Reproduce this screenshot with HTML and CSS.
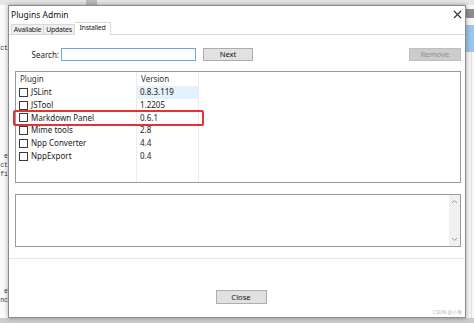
FILE: index.html
```html
<!DOCTYPE html>
<html lang="en">
<head>
  <meta charset="UTF-8">
  <title>Plugins Admin</title>
  <link rel="stylesheet" href="styles.css">
</head>
<body>

  <div class="top-band"><span class="thumb"></span></div>

  <div class="desk">
    <pre class="editor-left">




ct











e
ct
fi












e
nc</pre>

    <div class="dialog">
      <div class="titlebar">
        <span>Plugins Admin</span>
        <svg class="close-x" width="9" height="9" viewBox="0 0 9 9"><path d="M1 1L8 8M8 1L1 8" stroke="#333" stroke-width="1.1" fill="none"/></svg>
      </div>

      <div class="tabs">
        <div class="tab tab-available">Available</div>
        <div class="tab tab-updates">Updates</div>
        <div class="tab tab-installed active">Installed</div>
      </div>

      <div class="panel">
        <div class="search-row">
          <label class="search-label" for="search">Search:</label>
          <input type="text" id="search" class="search-input">
          <button class="btn next-btn">Next</button>
          <button class="btn remove-btn" disabled>Remove</button>
        </div>

        <div class="list">
          <div class="row head">
            <div class="cell">Plugin</div>
            <div class="cell">Version</div>
            <div class="cell"></div>
          </div>
          <div class="row">
            <div class="cell"><span class="check"></span>JSLint</div>
            <div class="cell hot">0.8.3.119</div>
            <div class="cell"></div>
          </div>
          <div class="row">
            <div class="cell"><span class="check"></span>JSTool</div>
            <div class="cell">1.2205</div>
            <div class="cell"></div>
          </div>
          <div class="row">
            <div class="cell"><span class="check"></span>Markdown Panel</div>
            <div class="cell">0.6.1</div>
            <div class="cell"></div>
          </div>
          <div class="row">
            <div class="cell"><span class="check"></span>Mime tools</div>
            <div class="cell">2.8</div>
            <div class="cell"></div>
          </div>
          <div class="row">
            <div class="cell"><span class="check"></span>Npp Converter</div>
            <div class="cell">4.4</div>
            <div class="cell"></div>
          </div>
          <div class="row">
            <div class="cell"><span class="check"></span>NppExport</div>
            <div class="cell">0.4</div>
            <div class="cell"></div>
          </div>
          <div class="row filler">
            <div class="cell"></div>
            <div class="cell"></div>
            <div class="cell"></div>
          </div>
          <div class="mark"></div>
        </div>

        <div class="desc">
          <div class="desc-text"></div>
          <div class="scrollbar">
            <svg width="7" height="5" viewBox="0 0 7 5"><path d="M1 4L3.5 1.5L6 4" stroke="#9a9a9a" fill="none"/></svg>
            <svg width="7" height="5" viewBox="0 0 7 5"><path d="M1 1L3.5 3.5L6 1" stroke="#9a9a9a" fill="none"/></svg>
          </div>
        </div>
      </div>

      <div class="footer">
        <button class="btn close-btn">Close</button>
      </div>

      <span class="watermark">CSDN @小菜</span>
    </div>

    <div class="editor-right">
      <div class="r-gray"></div>
      <div class="r-blue"></div>
      <div class="r-rest"></div>
    </div>
  </div>

  <div class="bottom-band"></div>

</body>
</html>
```

FILE: styles.css
```css
* {
  margin: 0;
  padding: 0;
  box-sizing: border-box;
}

body {
  width: 474px;
  height: 323px;
  overflow: hidden;
  background: #e4e4e4;
  font-family: "Noto Sans", Arial, sans-serif;
  font-size: 8px;
  color: #1a1a1a;
}

.top-band {
  height: 5px;
  background: #e6e6e6;
  padding-left: 86px;
}

.top-band .thumb {
  display: block;
  width: 11px;
  height: 5px;
  background: #bdbdbd;
}

.desk {
  display: flex;
  height: 313px;
}

.editor-left {
  width: 8px;
  background: #fbfbfb;
  font-family: "Liberation Mono", monospace;
  font-size: 6.5px;
  line-height: 9px;
  color: #333;
  overflow: hidden;
  padding-top: 3px;
  text-align: right;
}

.dialog {
  width: 458px;
  height: 313px;
  background: #fff;
  border: 1px solid #8c8c8c;
  box-shadow: 0 0 5px rgba(0, 0, 0, 0.35);
  display: flex;
  flex-direction: column;
  position: relative;
  z-index: 1;
}

.titlebar {
  height: 16px;
  display: flex;
  justify-content: space-between;
  align-items: center;
  padding: 0 3px 0 2px;
  font-size: 8.5px;
  color: #111;
}

.close-x {
  display: block;
}

.tabs {
  height: 12px;
  display: flex;
  align-items: flex-end;
  padding-left: 2px;
}

.tab {
  height: 10px;
  line-height: 9px;
  text-align: center;
  background: #f0f0f0;
  border: 1px solid #d9d9d9;
  border-bottom: none;
  font-size: 7px;
  letter-spacing: -0.25px;
  color: #222;
  white-space: nowrap;
}

.tab + .tab {
  border-left: none;
}

.tab-available {
  width: 33px;
}

.tab-updates {
  width: 31px;
}

.tab-installed {
  width: 36px;
}

.tab.active {
  height: 13px;
  line-height: 10px;
  margin-bottom: -1px;
  background: #fff;
  position: relative;
  z-index: 1;
}

.panel {
  border-top: 1px solid #d9d9d9;
  border-bottom: 1px solid #e6e6e6;
  padding: 13px 4px 11px 6px;
}

.search-row {
  display: flex;
  align-items: center;
  height: 13px;
}

.search-label {
  width: 46px;
  text-align: right;
  padding-right: 2px;
}

.search-input {
  width: 135px;
  height: 13px;
  border: 1px solid #6ea6dc;
  outline: none;
}

.btn {
  height: 13px;
  font-family: "Noto Sans", Arial, sans-serif;
  font-size: 7.6px;
  line-height: 11px;
  background: #e1e1e1;
  border: 1px solid #adadad;
  color: #111;
}

.next-btn {
  width: 50px;
  margin-left: 7px;
}

.remove-btn {
  width: 52px;
  margin-left: auto;
  background: #cccccc;
  border-color: #bfbfbf;
  color: #8f8f8f;
}

.list {
  margin-top: 10px;
  height: 112px;
  border: 1px solid #9a9a9a;
  display: flex;
  flex-direction: column;
  position: relative;
}

.row {
  display: grid;
  grid-template-columns: 121px 62px 1fr;
  height: 12.8px;
  line-height: 12.8px;
}

.row.head {
  height: 14px;
  line-height: 12px;
  color: #333;
}

.row.filler {
  flex: 1;
}

.cell {
  border-right: 1px solid #ececec;
  padding-left: 3px;
  display: flex;
  align-items: center;
  white-space: nowrap;
}

.cell:last-child {
  border-right: none;
}

.head .cell {
  padding-left: 4px;
}

.cell.hot {
  background: #e5f1fb;
}

.check {
  width: 9px;
  height: 9px;
  border: 1px solid #3a3a3a;
  margin-right: 3px;
  flex: none;
}

.mark {
  position: absolute;
  left: -3px;
  top: 38px;
  width: 191px;
  height: 16px;
  border: 2px solid #e23232;
  border-radius: 2px;
}

.desc {
  margin-top: 11px;
  height: 53px;
  border: 1px solid #9a9a9a;
  display: flex;
}

.desc-text {
  flex: 1;
}

.scrollbar {
  width: 11px;
  background: #f0f0f0;
  display: flex;
  flex-direction: column;
  justify-content: space-between;
  align-items: center;
  padding: 4px 0;
}

.scrollbar svg {
  display: block;
}

.footer {
  flex: 1;
  display: flex;
  justify-content: center;
  align-items: flex-start;
  padding-top: 31px;
  padding-left: 8px;
}

.close-btn {
  width: 51px;
  height: 14px;
}

.watermark {
  position: absolute;
  right: 3px;
  bottom: 2px;
  font-size: 5px;
  color: #b8b8b8;
}

.editor-right {
  flex: 1;
  background: #f7f7f7;
  display: flex;
  flex-direction: column;
}

.r-gray {
  height: 9px;
  margin-top: 4px;
  background: #8d8d8d;
}

.r-blue {
  height: 27px;
  margin-top: 7px;
  background: #9cc6ee;
}

.r-rest {
  flex: 1;
  border-left: 1px solid #e0e0e0;
  margin-left: 5px;
}

.bottom-band {
  height: 5px;
  background: #cdcdcd;
}
```
